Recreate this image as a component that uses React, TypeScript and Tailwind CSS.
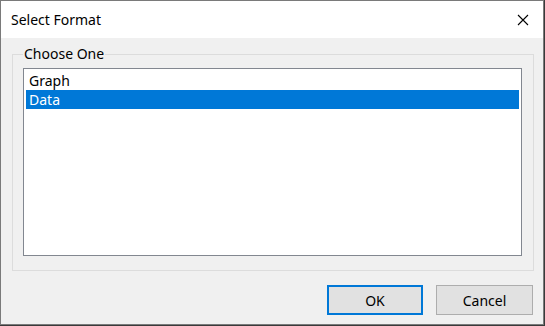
import React from "react";

const items = ["Graph", "Data"];

export default function App() {
  const selected = 1;
  return (
    <div
      className="h-[326px] w-[545px] bg-[#3a3a3a]"
      style={{ fontFamily: '"Noto Sans", "Open Sans", sans-serif' }}
    >
      <div className="flex h-[325px] w-[544px] flex-col border border-[#7a7a7a] bg-[#f0f0f0]">
        {/* title bar */}
        <div className="flex h-[37px] shrink-0 items-center justify-between bg-white pl-[10px] pr-[14px]">
          <span className="text-[14px] text-black">Select Format</span>
          <svg width="12" height="12" viewBox="0 0 12 12" className="text-black">
            <path d="M1 1 L11 11 M11 1 L1 11" stroke="currentColor" strokeWidth="1.1" />
          </svg>
        </div>

        <div className="flex flex-1 flex-col pl-[11px] pr-[9px] pt-[6px]">
          <fieldset className="h-[227px] border border-[#dcdcdc] pl-[10px] pr-[11px]">
            <legend className="px-[1px] text-[14px] leading-[20px] text-black">Choose One</legend>
            <div className="mt-[4px] h-[188px] border border-[#828790] bg-white p-[2px]">
              {items.map((it, i) => (
                <div
                  key={it}
                  className={
                    i === selected
                      ? "h-[19px] bg-[#0078d7] pl-[3px] text-[14px] leading-[19px] text-white"
                      : "h-[19px] pl-[3px] text-[14px] leading-[19px] text-black"
                  }
                >
                  {it}
                </div>
              ))}
            </div>
          </fieldset>

          <div className="mt-[14px] flex justify-end gap-[13px] pr-[1px]">
            <button className="h-[30px] w-[96px] border-2 border-[#0078d7] bg-[#e1e1e1] text-[14px] text-black">
              OK
            </button>
            <button className="h-[30px] w-[97px] border border-[#adadad] bg-[#e1e1e1] text-[14px] text-black">
              Cancel
            </button>
          </div>
        </div>
      </div>
    </div>
  );
}
